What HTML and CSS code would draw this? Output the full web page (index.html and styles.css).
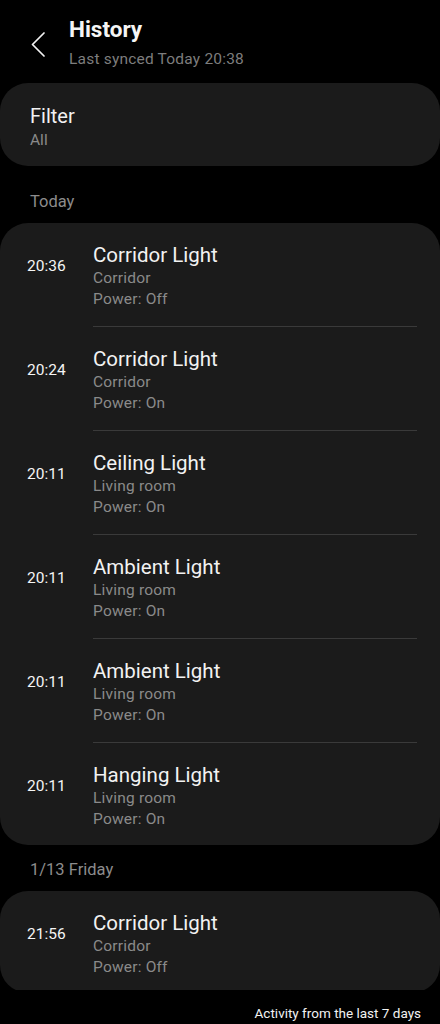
FILE: index.html
```html
<!DOCTYPE html>
<html lang="en">
<head>
<meta charset="utf-8">
<title>History</title>
<link rel="stylesheet" href="styles.css">
</head>
<body>
<header class="top">
  <div class="back">
    <svg width="24" height="26" viewBox="0 0 24 26" aria-hidden="true"><path d="M18 1 L6.5 12.5 L18 24" fill="none" stroke="#f2f2f2" stroke-width="1.7" stroke-linecap="round" stroke-linejoin="round"/></svg>
  </div>
  <div class="titles">
    <div class="title">History</div>
    <div class="synced">Last synced Today 20:38</div>
  </div>
</header>

<section class="filter">
  <div class="filter-label">Filter</div>
  <div class="filter-value">All</div>
</section>

<div class="day first">Today</div>
<section class="card">
  <div class="row">
    <div class="time">20:36</div>
    <div class="info"><div class="name">Corridor Light</div><div class="sub">Corridor</div><div class="sub">Power: Off</div></div>
  </div>
  <div class="row">
    <div class="time">20:24</div>
    <div class="info"><div class="name">Corridor Light</div><div class="sub">Corridor</div><div class="sub">Power: On</div></div>
  </div>
  <div class="row">
    <div class="time">20:11</div>
    <div class="info"><div class="name">Ceiling Light</div><div class="sub">Living room</div><div class="sub">Power: On</div></div>
  </div>
  <div class="row">
    <div class="time">20:11</div>
    <div class="info"><div class="name">Ambient Light</div><div class="sub">Living room</div><div class="sub">Power: On</div></div>
  </div>
  <div class="row">
    <div class="time">20:11</div>
    <div class="info"><div class="name">Ambient Light</div><div class="sub">Living room</div><div class="sub">Power: On</div></div>
  </div>
  <div class="row">
    <div class="time">20:11</div>
    <div class="info"><div class="name">Hanging Light</div><div class="sub">Living room</div><div class="sub">Power: On</div></div>
  </div>
</section>

<div class="day">1/13 Friday</div>
<section class="card">
  <div class="row">
    <div class="time">21:56</div>
    <div class="info"><div class="name">Corridor Light</div><div class="sub">Corridor</div><div class="sub">Power: Off</div></div>
  </div>
</section>

<footer class="footer">Activity from the last 7 days</footer>
</body>
</html>
```

FILE: styles.css
```css
* { box-sizing: border-box; }
html, body { margin: 0; padding: 0; background: #000; }
body {
  font-family: Roboto, "Noto Sans", "Liberation Sans", sans-serif;
  color: #f2f2f2;
  padding-bottom: 40px;
}
.top {
  display: flex;
  padding: 15px 0 0 26px;
}
.back {
  width: 43px;
  flex: none;
}
.back svg { display: block; margin-top: 17px; }
.title {
  font-size: 22.5px;
  font-weight: 700;
  line-height: 28px;
  color: #f5f5f5;
}
.synced {
  margin-top: 6px;
  font-size: 15.5px;
  letter-spacing: 0.2px;
  line-height: 20px;
  color: #7d7d7d;
}
.filter {
  margin: 14px 0 11px;
  background: #1b1b1b;
  border-radius: 28px;
  padding: 20px 30px 15px;
}
.filter-label { font-size: 20px; line-height: 26px; color: #f2f2f2; }
.filter-value { font-size: 15.5px; line-height: 22px; color: #8a8a8a; }
.day {
  padding: 15px 30px 11px;
  font-size: 16.5px;
  line-height: 20px;
  color: #8c8c8c;
}
.card {
  background: #1b1b1b;
  border-radius: 28px;
  padding: 0 23px 0 27px;
}
.row {
  display: flex;
  padding: 19px 0 16px;
  position: relative;
}
.row + .row::before {
  content: "";
  position: absolute;
  top: -1px;
  left: 66px;
  right: 0;
  height: 1px;
  background: #3a3a3a;
}
.row + .row { margin-top: 1px; }
.row:last-child { padding-bottom: 15px; }
.time {
  width: 66px;
  flex: none;
  margin-top: 15px;
  font-size: 15.5px;
  line-height: 18px;
  color: #f5f5f5;
}
.name { font-size: 20.5px; line-height: 26px; color: #f2f2f2; }
.sub { font-size: 15.5px; letter-spacing: 0.2px; line-height: 21px; color: #8a8a8a; }
.footer {
  position: fixed;
  left: 0;
  right: 0;
  bottom: 0;
  height: 34px;
  background: #000;
  text-align: right;
  padding: 15px 19px 0 0;
  font-size: 13.5px;
  line-height: 16px;
  color: #f2f2f2;
}
```
